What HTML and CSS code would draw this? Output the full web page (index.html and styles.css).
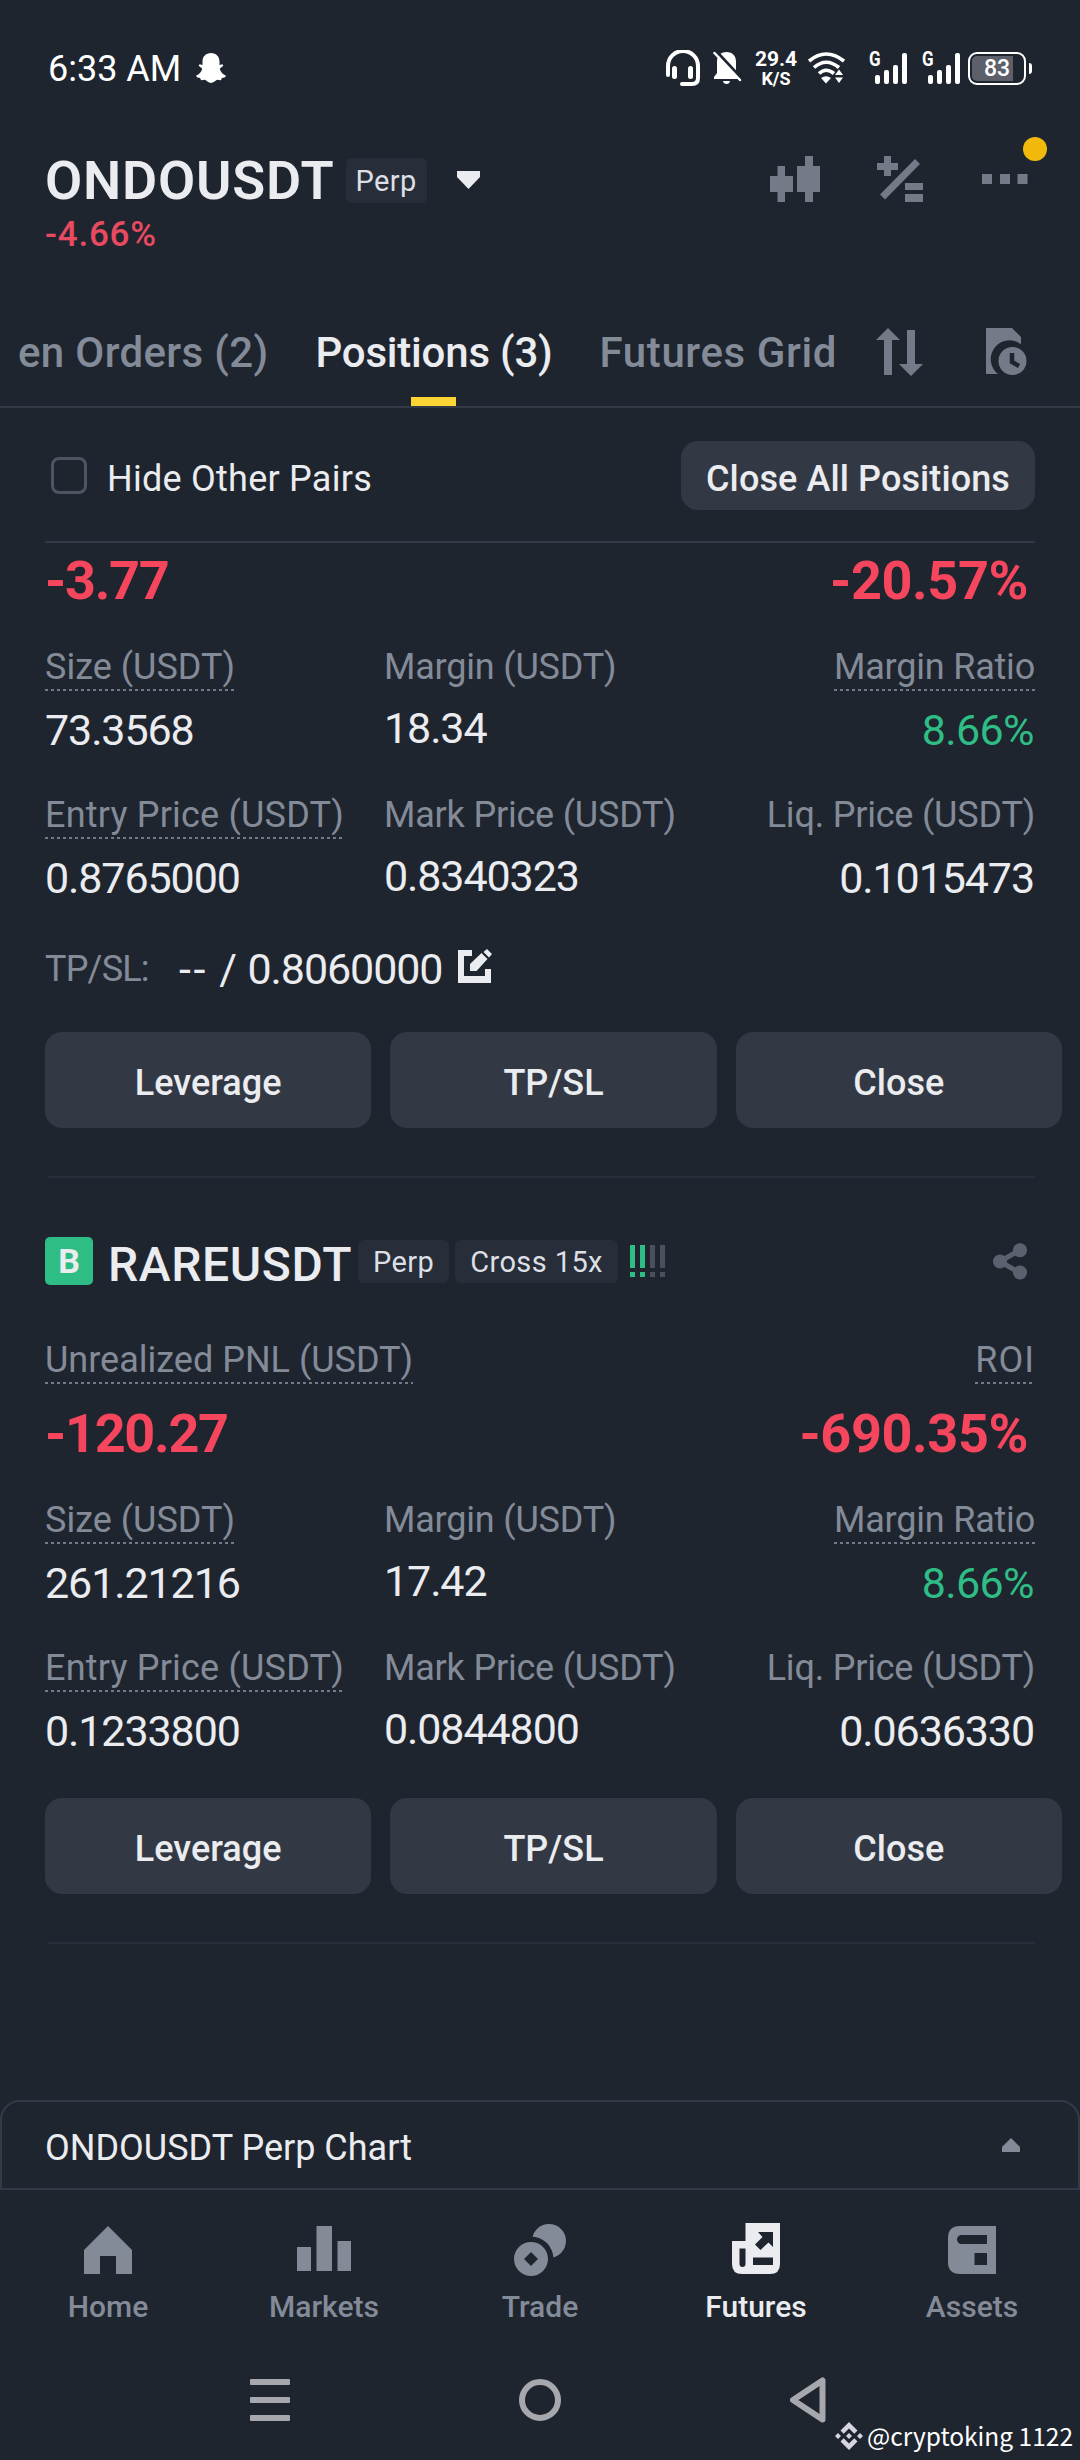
FILE: index.html
```html
<!DOCTYPE html>
<html lang="en">
<head>
    <meta charset="UTF-8">
    <meta name="viewport" content="width=device-width, initial-scale=1.0">
    <title>Futures Positions</title>
    <link rel="stylesheet" href="styles.css">
</head>
<body>
    <div class="app">
        <!-- status bar -->
        <div class="status">
            <span class="time">6:33 AM</span>
            <svg class="snap" width="30" height="30" viewBox="0 0 30 30" fill="#fff"><path d="M15 0c5 0 8.500 3.500 8.500 8.500v3.500l3-.8.8 1.500-3.600 3c1 3.500 3 5.500 6.300 7-.5 1.800-2.200 2-4.200 2.300l-.8 2.200-4-.4c-2 1-3.500 3.200-6 3.200s-4-2.200-6-3.200l-4 .4-.8-2.200C2.200 24.700.500 24.500 0 22.700c3.300-1.500 5.300-3.500 6.300-7l-3.600-3 .8-1.500 3 .8V8.500C6.500 3.500 10 0 15 0z"/></svg>
            <div class="status-icons">
                <svg class="headset" width="34" height="36" viewBox="0 0 34 36"><path d="M2 25V16a15 15 0 0 1 30 0v12q0 6-6 6H16" fill="none" stroke="#fff" stroke-width="4" stroke-linecap="round"/><rect x="6" y="16" width="5" height="13" rx="2.500" fill="#fff"/><rect x="22" y="16" width="5" height="13" rx="2.500" fill="#fff"/></svg>
                <svg class="bell" width="29" height="34" viewBox="0 0 29 34"><path d="M13.500 1c6 0 9.500 4 9.500 9.500V21l4 5v2H1v-2l3-4V10.500C4 5 7.500 1 13.500 1zM10 30h7q-.5 3-3.500 3T10 30z" fill="#fff"/><path d="M4 1l25 27" stroke="#1f252f" stroke-width="3"/><path d="M1.500 2L27 29" stroke="#fff" stroke-width="2.500" stroke-linecap="round"/></svg>
                <div class="speed"><b>29.4</b><b>K/S</b></div>
                <svg class="wifi" width="37" height="32" viewBox="0 0 37 32"><g fill="none" stroke="#fff" stroke-width="3.600"><path d="M1 9Q18 -5 36 9"/><path d="M6 15.500Q18 5 31 15.500"/><path d="M11 21.500Q18 15 26 21.500"/></g><path d="M13 26q5-3.500 10 0l-5 5.500zM31 17.500l4 5.500h-8zM31 31l4-5.500h-8z" fill="#fff"/></svg>
                <div class="signal">
                    <b>G</b>
                    <svg width="37" height="32" viewBox="0 0 37 32" fill="#fff"><rect x="5" y="23" width="5" height="9" rx="2"/><rect x="14" y="18" width="5" height="14" rx="2"/><rect x="23" y="13" width="5" height="19" rx="2"/><rect x="32" y="1" width="5" height="31" rx="2"/></svg>
                </div>
                <div class="signal">
                    <b>G</b>
                    <svg width="37" height="32" viewBox="0 0 37 32" fill="#fff"><rect x="5" y="23" width="5" height="9" rx="2"/><rect x="14" y="18" width="5" height="14" rx="2"/><rect x="23" y="13" width="5" height="19" rx="2"/><rect x="32" y="1" width="5" height="31" rx="2"/></svg>
                </div>
                <div class="battery"><span>83</span></div>
            </div>
        </div>

        <!-- pair header -->
        <header class="header">
            <div class="pair">
                <div class="pair-row">
                    <h1>ONDOUSDT</h1>
                    <span class="tag">Perp</span>
                    <svg class="caret" width="23" height="18" viewBox="0 0 23 18" fill="#eaecef"><path d="M0 0H23V6L11.500 18 0 6z"/></svg>
                </div>
                <p class="change">-4.66%</p>
            </div>
            <div class="tools">
                <svg width="50" height="46" viewBox="0 0 50 46" fill="#747a88"><path d="M7.500 10H15V20H23V36H15V46H7.500V36H0V20H7.500zM35 0H43V10H50V36H43V46H35V36H27V10H35z"/></svg>
                <svg width="46" height="46" viewBox="0 0 46 46" fill="#747a88"><path d="M7 0H14V7H21V14H14V20H7V14H0V7H7zM28 27H46V34H28zM28 38H46V46H28z"/><path d="M5.500 41L40.500 5.500" stroke="#747a88" stroke-width="7"/></svg>
                <div class="more">
                    <svg width="46" height="10" viewBox="0 0 46 10" fill="#747a88"><path d="M0 0H10V10H0zM18 0H28V10H18zM35.500 0H45.500V10H35.500z"/></svg>
                    <i class="dot"></i>
                </div>
            </div>
        </header>

        <nav class="tabs">
            <a class="orders">en Orders (2)</a>
            <a class="active">Positions (3)</a>
            <a class="futures-grid">Futures Grid</a>
            <div class="tab-icons">
                <svg width="47" height="48" viewBox="0 0 47 48" fill="#747a88"><path d="M12 0L24 12H16V47H8V12H0zM31 2H39V36H47L35 48 23 36H31z"/></svg>
                <svg width="41" height="48" viewBox="0 0 41 48"><path d="M0 0H26L35 9V16.300A18 18 0 0 0 12 46H0z" fill="#747a88"/><circle cx="26.500" cy="33" r="14" fill="#747a88"/><path d="M26 25V34L33 38" fill="none" stroke="#1f252f" stroke-width="4.500"/></svg>
            </div>
        </nav>

        <div class="filter">
            <span class="checkbox"></span>
            <span class="filter-text">Hide Other Pairs</span>
            <button class="close-all">Close All Positions</button>
        </div>

        <main class="list">
            <section class="position">
                <div class="pnl"><span>-3.77</span><span>-20.57%</span></div>
                <div class="grid">
                    <div><label class="u">Size (USDT)</label><p>73.3568</p></div>
                    <div class="mid"><label>Margin (USDT)</label><p>18.34</p></div>
                    <div class="right"><label class="u">Margin Ratio</label><p class="green">8.66%</p></div>
                    <div><label class="u wide">Entry Price (USDT)</label><p>0.8765000</p></div>
                    <div class="mid"><label>Mark Price (USDT)</label><p>0.8340323</p></div>
                    <div class="right"><label>Liq. Price (USDT)</label><p>0.1015473</p></div>
                </div>
                <div class="tpsl">
                    <label>TP/SL:</label>
                    <p><span class="none">--</span> / 0.8060000</p>
                    <svg width="34" height="34" viewBox="0 0 34 34" fill="#eaecef"><path d="M0 1H14V7H6V27H27V20H33V34H0z"/><path d="M12 22V15L23.500 4 29.500 10 18.500 22zM25.500 3L29 0 34 5 31 8.500z"/></svg>
                </div>
                <div class="buttons">
                    <button>Leverage</button>
                    <button>TP/SL</button>
                    <button>Close</button>
                </div>
            </section>

            <section class="position second">
                <div class="head">
                    <span class="side">B</span>
                    <h2>RAREUSDT</h2>
                    <span class="tag">Perp</span>
                    <span class="tag">Cross 15x</span>
                    <svg class="level" width="36" height="32" viewBox="0 0 36 32"><path d="M0 0H5V23H0zM0 27H5V32H0zM10 0H15V23H10zM10 27H15V32H10z" fill="#2ebd85"/><path d="M20 0H25V23H20zM20 27H25V32H20zM30 0H35V23H30zM30 27H35V32H30z" fill="#4a505d"/></svg>
                    <svg class="share" width="35" height="37" viewBox="0 0 35 37" fill="#5b616e"><path d="M27 7L7 18.500 27 30" fill="none" stroke="#5b616e" stroke-width="5"/><circle cx="7" cy="18.500" r="7"/><circle cx="27" cy="7.300" r="7"/><circle cx="27" cy="29.500" r="7"/></svg>
                </div>
                <div class="labels"><label class="u">Unrealized PNL (USDT)</label><label class="u roi">ROI</label></div>
                <div class="pnl"><span>-120.27</span><span>-690.35%</span></div>
                <div class="grid">
                    <div><label class="u">Size (USDT)</label><p>261.21216</p></div>
                    <div class="mid"><label>Margin (USDT)</label><p>17.42</p></div>
                    <div class="right"><label class="u">Margin Ratio</label><p class="green">8.66%</p></div>
                    <div><label class="u wide">Entry Price (USDT)</label><p>0.1233800</p></div>
                    <div class="mid"><label>Mark Price (USDT)</label><p>0.0844800</p></div>
                    <div class="right"><label>Liq. Price (USDT)</label><p>0.0636330</p></div>
                </div>
                <div class="buttons">
                    <button>Leverage</button>
                    <button>TP/SL</button>
                    <button>Close</button>
                </div>
            </section>
        </main>

        <div class="chart-bar">
            <span>ONDOUSDT Perp Chart</span>
            <svg width="18" height="14" viewBox="0 0 18 14" fill="#848b98"><path d="M9 0L18 9V14H0V9z"/></svg>
        </div>

        <nav class="bottom">
            <a>
                <svg width="54" height="54" viewBox="0 0 54 54" fill="#848b98"><path d="M27 4L51 28V52H35V34H19V52H3V28z"/></svg>
                <span>Home</span>
            </a>
            <a>
                <svg width="54" height="54" viewBox="0 0 54 54" fill="#848b98"><path d="M0 25H14V49H0zM19.500 4H35V49H19.500zM40.500 19H54V49H40.500z"/></svg>
                <span>Markets</span>
            </a>
            <a>
                <svg width="54" height="54" viewBox="0 0 54 54"><circle cx="36" cy="19" r="17" fill="#848b98"/><circle cx="18" cy="37" r="22.500" fill="#1f252f"/><circle cx="18" cy="37" r="17" fill="#848b98"/><path d="M18 30L25 37 18 44 11 37z" fill="#1f252f"/></svg>
                <span>Trade</span>
            </a>
            <a class="active">
                <svg width="54" height="54" viewBox="0 0 54 54"><path d="M16.500 1H51V42Q51 52 41 52H13Q3 52 3 42V19H16.500z" fill="#eaecef"/><path d="M10.500 26.500H16.500V42Q16.500 45 13.500 45T10.500 42zM24 35.500H44V43H24zM29 10H44V25L39.500 20.500 31.500 28 26 22.500 33.500 15z" fill="#1f252f"/></svg>
                <span>Futures</span>
            </a>
            <a>
                <svg width="54" height="54" viewBox="0 0 54 54"><path d="M15 4H51V52H15Q3 52 3 40V16Q3 4 15 4z" fill="#848b98"/><path d="M16.500 13H42V22H16.500A4.500 4.500 0 0 1 16.500 13zM29.500 31H42V43H29.500z" fill="#1f252f"/></svg>
                <span>Assets</span>
            </a>
        </nav>

        <!-- android navigation -->
        <div class="system">
            <svg width="40" height="42" viewBox="0 0 40 42" fill="#a6a8ae"><rect width="40" height="6" rx="1"/><rect y="18" width="40" height="6" rx="1"/><rect y="36" width="40" height="6" rx="1"/></svg>
            <svg width="42" height="42" viewBox="0 0 42 42"><circle cx="21" cy="21" r="18" fill="none" stroke="#a6a8ae" stroke-width="6"/></svg>
            <svg width="36" height="46" viewBox="0 0 36 46"><path d="M32.500 3.500V42.500L3 23z" fill="none" stroke="#a6a8ae" stroke-width="6" stroke-linejoin="round"/></svg>
            <div class="watermark">
                <svg width="28" height="28" viewBox="0 0 28 28" fill="#d5d6de"><path d="M14 0L22.500 8.500 19.300 11.700 14 6.400 8.700 11.700 5.500 8.500zM14 28L22.500 19.500 19.300 16.300 14 21.600 8.700 16.300 5.500 19.500zM3 11L6 14 3 17 0 14zM25 11L28 14 25 17 22 14zM14 11L17 14 14 17 11 14z"/></svg>
                <span>@cryptoking 1122</span>
            </div>
        </div>
    </div>
</body>
</html>
```

FILE: styles.css
```css
*{
    margin: 0;
    padding: 0;
    box-sizing: border-box;
}
body{
    background-color: #1f252f;
    color: #eaecef;
    font-family: Roboto, "Noto Sans", sans-serif;
}
svg{
    display: block;
    flex-shrink: 0;
}
.app{
    width: 1080px;
    height: 2460px;
    display: flex;
    flex-direction: column;
    overflow: hidden;
}

/* status bar */
.status{
    height: 136px;
    padding: 0 48px;
    display: flex;
    align-items: center;
    color: #fff;
}
.time{
    padding-top: 1px;
    font-size: 36px;
    white-space: nowrap;
}
.snap{
    margin-left: 15px;
}
.status-icons{
    margin-left: auto;
    display: flex;
    align-items: center;
}
.bell{
    margin-left: 13px;
}
.speed{
    width: 40px;
    margin-left: 14px;
    display: flex;
    flex-direction: column;
    align-items: center;
    font-size: 21px;
    line-height: 20px;
}
.speed b:last-child{
    font-size: 18px;
    line-height: 19px;
}
.wifi{
    margin: 0 25px 0 12px;
}
.signal{
    position: relative;
    margin-right: 16px;
}
.signal + .signal{
    margin-right: 8px;
}
.signal b{
    position: absolute;
    left: -1px;
    top: -4px;
    font-size: 20px;
    line-height: 22px;
    transform: scaleX(.85);
    transform-origin: left;
}
.battery{
    position: relative;
    width: 58px;
    height: 33px;
    margin-right: 6px;
    padding: 2px;
    border: 2px solid #fff;
    border-radius: 9px;
}
.battery span{
    display: block;
    width: 50px;
    height: 25px;
    border-radius: 5px;
    background: linear-gradient(to right, #5b606a 41px, transparent 41px);
    font-size: 23px;
    font-weight: 500;
    line-height: 26px;
    text-align: center;
}
.battery::after{
    content: "";
    position: absolute;
    right: -8px;
    top: 9px;
    width: 3px;
    height: 11px;
    border-radius: 0 3px 3px 0;
    background-color: #fff;
}

/* pair header */
.header{
    height: 162px;
    padding: 14px 52px 0 45px;
    display: flex;
    justify-content: space-between;
}
.pair-row{
    height: 60px;
    display: flex;
    align-items: center;
}
.pair h1{
    padding-top: 2px;
    font-size: 54px;
    font-weight: 600;
    line-height: 60px;
    letter-spacing: .8px;
}
.tag{
    height: 45px;
    padding: 0 10px;
    border-radius: 6px;
    background-color: #282e39;
    color: #dcdfe5;
    font-size: 29px;
    line-height: 47px;
    letter-spacing: .4px;
    white-space: nowrap;
}
.pair .tag{
    margin-left: 11px;
}
.caret{
    margin-left: 30px;
}
.change{
    color: #e84a60;
    font-size: 35px;
    font-weight: 500;
    line-height: 49px;
    letter-spacing: .8px;
}
.tools{
    height: 58px;
    display: flex;
    align-items: center;
}
.tools > svg:first-child{
    margin-right: 57px;
}
.more{
    position: relative;
    margin-left: 59px;
}
.dot{
    position: absolute;
    left: 41px;
    top: -37px;
    width: 24px;
    height: 24px;
    border-radius: 50%;
    background-color: #f0b90b;
}

.tabs{
    height: 110px;
    padding: 0 53px 0 18px;
    border-bottom: 2px solid #333a45;
    display: flex;
    align-items: center;
    gap: 47px;
    color: #848b98;
    font-size: 42px;
    font-weight: 500;
    white-space: nowrap;
}
.tabs a{
    position: relative;
    height: 108px;
    line-height: 110px;
}
.tabs .orders{
    letter-spacing: .35px;
}
.tabs .futures-grid{
    letter-spacing: .6px;
}
.tabs .active{
    color: #eaecef;
    letter-spacing: -.2px;
}
.tabs .active::after{
    content: "";
    position: absolute;
    left: 50%;
    bottom: 0;
    width: 45px;
    height: 9px;
    margin-left: -23px;
    background-color: #fcd535;
}
.tab-icons{
    margin-left: -8px;
    display: flex;
    gap: 63px;
}

.filter{
    height: 135px;
    margin: 0 45px;
    padding: 2px 0 0 6px;
    border-bottom: 2px solid #333a45;
    display: flex;
    align-items: center;
}
.checkbox{
    width: 36px;
    height: 37px;
    border: 3px solid #4d5462;
    border-radius: 8px;
}
.filter-text{
    margin-left: 20px;
    padding-top: 7px;
    font-size: 36px;
    letter-spacing: .25px;
}
button{
    border: none;
    background-color: #333944;
    color: #eaecef;
    font-family: inherit;
    font-size: 36px;
    font-weight: 500;
}
.close-all{
    width: 354px;
    height: 69px;
    margin-left: auto;
    padding-top: 7px;
    border-radius: 17px;
    letter-spacing: .1px;
}

/* positions */
.position{
    padding: 0 45px;
}
.pnl{
    display: flex;
    justify-content: space-between;
    padding-right: 7px;
    color: #f6465d;
    font-size: 54px;
    font-weight: 700;
    line-height: 75px;
    letter-spacing: -.4px;
}
.pnl span:first-child{
    letter-spacing: -1.3px;
}
.grid{
    display: grid;
    grid-template-columns: 340px 330px 320px;
    row-gap: 31px;
    margin-top: 25px;
}
label{
    display: inline-block;
    height: 48px;
    color: #848b98;
    font-size: 36px;
    line-height: 48px;
    white-space: nowrap;
    vertical-align: top;
}
label.u{
    background: repeating-linear-gradient(to right, #747a88 0 3px, transparent 3px 6px) left bottom / 100% 2px no-repeat;
}
label.wide{
    letter-spacing: .2px;
}
label.roi{
    letter-spacing: 1px;
}
.mid{
    margin-left: -1px;
}
.mid label, .right label{
    letter-spacing: -.2px;
}
.grid p, .tpsl p{
    margin-top: 9px;
    font-size: 43px;
    line-height: 60px;
    letter-spacing: -1.1px;
}
.grid .mid p{
    margin-top: 7px;
}
.right{
    text-align: right;
}
.grid .right p{
    padding-right: 1px;
}
.grid .right .green{
    color: #2ebd85;
    letter-spacing: -.6px;
}
.tpsl{
    display: flex;
    align-items: center;
    height: 60px;
    margin-top: 31px;
}
.tpsl label{
    width: 134px;
    letter-spacing: -.8px;
}
.tpsl p{
    width: 263px;
    margin: 0;
    white-space: pre;
    word-spacing: 2px;
}
.tpsl .none{
    letter-spacing: 2.500px;
}
.tpsl svg{
    margin: -6px 0 0 16px;
}
.buttons{
    width: 1017px;
    margin-top: 33px;
    display: grid;
    grid-template-columns: repeat(3, 1fr);
    gap: 19px;
}
.buttons button{
    height: 96px;
    padding-top: 5px;
    border-radius: 17px;
}
.position::after{
    content: "";
    display: block;
    height: 2px;
    margin: 48px 0 0 3px;
    background-color: #292f3a;
}
.second{
    padding-top: 59px;
}
.second .buttons{
    margin-top: 37px;
}
.head{
    height: 48px;
    display: flex;
    align-items: center;
}
.side{
    width: 48px;
    height: 48px;
    border-radius: 5px;
    background-color: #2ebd85;
    font-size: 34px;
    font-weight: 700;
    line-height: 49px;
    text-align: center;
}
.head h2{
    width: 250px;
    margin-left: 15px;
    padding-top: 7px;
    font-size: 48px;
    font-weight: 500;
    letter-spacing: .6px;
}
.head .tag{
    height: 43px;
    padding: 0 15px;
    line-height: 45px;
}
.head .tag + .tag{
    margin-left: 6px;
}
.level{
    margin-left: 12px;
}
.share{
    margin: 0 7px 0 auto;
}
.labels{
    display: flex;
    justify-content: space-between;
    margin: 51px 0 12px;
}

/* footer */
.chart-bar{
    height: 90px;
    margin-top: auto;
    padding: 5px 58px 0 43px;
    border: 2px solid #333a45;
    border-radius: 20px 20px 0 0;
    display: flex;
    justify-content: space-between;
    align-items: center;
    font-size: 36px;
}
.chart-bar svg{
    margin-top: -5px;
}
.bottom{
    height: 150px;
    padding-top: 32px;
    display: grid;
    grid-template-columns: repeat(5, 1fr);
    color: #848b98;
    font-size: 30px;
    font-weight: 500;
    line-height: 34px;
}
.bottom a{
    display: flex;
    flex-direction: column;
    align-items: center;
    gap: 14px;
}
.bottom .active{
    color: #eaecef;
}
.system{
    position: relative;
    height: 120px;
    padding: 0 254px 0 250px;
    display: flex;
    justify-content: space-between;
    align-items: center;
}
.watermark{
    position: absolute;
    right: 7px;
    bottom: 6px;
    display: flex;
    align-items: center;
    gap: 4px;
    color: #fff;
    font-family: "Noto Sans CJK SC", sans-serif;
    font-size: 24.500px;
    line-height: 36px;
    white-space: nowrap;
}
```
